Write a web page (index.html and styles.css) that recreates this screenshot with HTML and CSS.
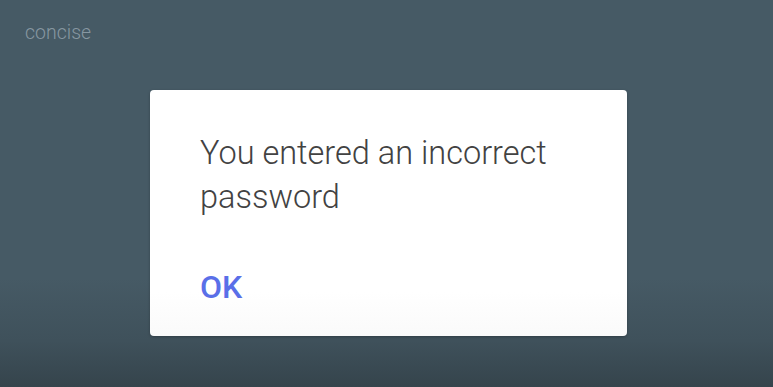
FILE: index.html
```html
<!DOCTYPE html>
<html>
<head>
<meta charset="utf-8">
<link rel="stylesheet" href="styles.css">
</head>
<body>
<div class="screen">
  <div class="label">concise</div>
  <div class="stage">
    <div class="dialog">
      <p class="message">You entered an incorrect password</p>
      <div class="actions"><span class="ok">OK</span></div>
    </div>
  </div>
</div>
</body>
</html>
```
FILE: styles.css
```css
html, body {
  margin: 0;
  padding: 0;
}
body {
  width: 773px;
  height: 387px;
  overflow: hidden;
  font-family: Roboto, "Liberation Sans", sans-serif;
}
.screen {
  width: 773px;
  height: 387px;
  box-sizing: border-box;
  padding: 22px 0 0 25px;
  background: linear-gradient(to bottom, #465a65 0%, #465a65 72%, #3f515b 88%, #35444c 100%);
  display: flex;
  flex-direction: column;
}
.label {
  font-size: 19.5px;
  font-weight: 300;
  color: #8797a1;
  line-height: 22px;
}
.stage {
  margin-top: 46px;
  padding-left: 125px;
}
.dialog {
  width: 477px;
  height: 246px;
  box-sizing: border-box;
  background: linear-gradient(to bottom, #ffffff 0%, #ffffff 82%, #fafafa 100%);
  border-radius: 4px;
  padding: 41px 50px 0 50px;
  box-shadow: 0 1px 3px rgba(0,0,0,0.25);
}
.message {
  margin: 0;
  font-size: 32.5px;
  font-weight: 300;
  line-height: 44px;
  color: #424242;
  width: 380px;
}
.actions {
  margin-top: 48px;
}
.ok {
  font-size: 32px;
  font-weight: 500;
  color: #5a6fe8;
  line-height: 40px;
}
```
